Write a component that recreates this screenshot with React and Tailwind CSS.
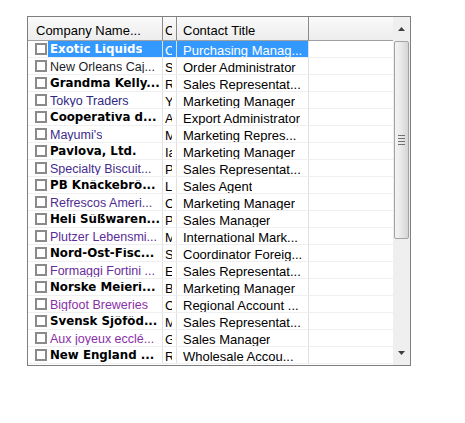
import React from 'react';

// Northwind suppliers, as the grid shows them (cut to the column width)
const rows = [
  { company: 'Exotic Liquids', contact: 'Charlotte Cooper', title: 'Purchasing Manag...', bold: true, color: '#000000' },
  { company: 'New Orleans Caj...', contact: 'Shelley Burke', title: 'Order Administrator', bold: false, color: '#1c1c28' },
  { company: 'Grandma Kelly...', contact: 'Regina Murphy', title: 'Sales Representat...', bold: true, color: '#000000' },
  { company: 'Tokyo Traders', contact: 'Yoshi Nagase', title: 'Marketing Manager', bold: false, color: '#2e2884' },
  { company: 'Cooperativa d...', contact: 'Antonio del Valle Saavedra', title: 'Export Administrator', bold: true, color: '#000000' },
  { company: "Mayumi's", contact: 'Mayumi Ohno', title: 'Marketing Repres...', bold: false, color: '#3b2a8c' },
  { company: 'Pavlova, Ltd.', contact: 'Ian Devling', title: 'Marketing Manager', bold: true, color: '#000000' },
  { company: 'Specialty Biscuit...', contact: 'Peter Wilson', title: 'Sales Representat...', bold: false, color: '#462c8e' },
  { company: 'PB Knäckebrö...', contact: 'Lars Peterson', title: 'Sales Agent', bold: true, color: '#000000' },
  { company: 'Refrescos Ameri...', contact: 'Carlos Diaz', title: 'Marketing Manager', bold: false, color: '#4f2c92' },
  { company: 'Heli Süßwaren...', contact: 'Petra Winkler', title: 'Sales Manager', bold: true, color: '#000000' },
  { company: 'Plutzer Lebensmi...', contact: 'Martin Bein', title: 'International Mark...', bold: false, color: '#5a2c96' },
  { company: 'Nord-Ost-Fisc...', contact: 'Sven Petersen', title: 'Coordinator Foreig...', bold: true, color: '#000000' },
  { company: 'Formaggi Fortini ...', contact: 'Elio Rossi', title: 'Sales Representat...', bold: false, color: '#6a2c9a' },
  { company: 'Norske Meieri...', contact: 'Beate Vileid', title: 'Marketing Manager', bold: true, color: '#000000' },
  { company: 'Bigfoot Breweries', contact: 'Cheryl Saylor', title: 'Regional Account ...', bold: false, color: '#8a30a6' },
  { company: 'Svensk Sjöföd...', contact: 'Michael Björn', title: 'Sales Representat...', bold: true, color: '#000000' },
  { company: 'Aux joyeux ecclé...', contact: 'Guylène Nodier', title: 'Sales Manager', bold: false, color: '#8a30a8' },
  { company: 'New England ...', contact: 'Robb Merchant', title: 'Wholesale Accou...', bold: true, color: '#000000' },
];

function Checkbox() {
  return <span className="block w-[12px] h-[12px] border-2 border-[#8a8a8a] bg-white shrink-0" />;
}

function App() {
  return (
    <div className="w-[465px] h-[423px] bg-white pt-[16px] pl-[27px]" style={{ fontFamily: '"Liberation Sans", Arial, sans-serif' }}>
      <div className="w-[384px] h-[350px] border border-[#7e7e7e] flex overflow-hidden bg-white text-[13px] leading-none">
        {/* grid area */}
        <div className="flex-1 flex flex-col overflow-hidden">
          {/* header */}
          <div className="flex h-[24px] shrink-0 bg-gradient-to-b from-[#fafafa] to-[#ededed] border-b border-[#a0a0a0] text-black">
            <div className="w-[135px] shrink-0 border-r border-[#8a8a8a] pl-[8px] pt-[3px] flex items-center overflow-hidden whitespace-nowrap">Company Name...</div>
            <div className="w-[14px] shrink-0 border-r border-[#8a8a8a] pl-[2px] pr-[4px] pt-[3px] flex items-center">
              <span className="block overflow-hidden whitespace-nowrap">Contact Name</span>
            </div>
            <div className="w-[132px] shrink-0 border-r border-[#8a8a8a] pl-[6px] pt-[3px] flex items-center overflow-hidden whitespace-nowrap">Contact Title</div>
            <div className="flex-1" />
          </div>
          {/* rows */}
          {rows.map((r, i) => {
            const sel = i === 0;
            return (
              <div key={i} className="flex h-[17px] shrink-0 border-b border-[#efefef]">
                <div className="w-[135px] shrink-0 flex items-center border-r border-[#e0e0e0]">
                  <div className="w-[20px] pl-[7px] shrink-0"><Checkbox /></div>
                  <div
                    className={`flex-1 min-w-0 h-full flex items-center pl-[2px] pt-[2px] ${sel ? 'bg-[#3399ff] text-white' : ''}`}
                    style={sel ? undefined : { color: r.color }}
                  >
                    <span
                      className={`block overflow-hidden whitespace-nowrap ${r.bold ? 'font-bold text-[11.8px]' : 'text-[12.5px]'}`}
                      style={r.bold ? { fontFamily: '"DejaVu Sans", Verdana, sans-serif' } : undefined}
                    >
                      {r.company}
                    </span>
                  </div>
                </div>
                <div className={`w-[14px] shrink-0 border-r border-[#e0e0e0] pl-[2px] pr-[4px] pt-[2px] flex items-center ${sel ? 'bg-[#3399ff] text-white' : 'text-black'}`}>
                  <span className="block overflow-hidden whitespace-nowrap">{r.contact}</span>
                </div>
                <div className={`w-[132px] shrink-0 border-r border-[#e0e0e0] pl-[6px] pr-[1px] pt-[2px] flex items-center ${sel ? 'bg-[#3399ff] text-white' : 'text-black'}`}>
                  <span className="block overflow-hidden whitespace-nowrap">{r.title}</span>
                </div>
                <div className="flex-1" />
              </div>
            );
          })}
        </div>
        {/* vertical scrollbar */}
        <div className="w-[17px] shrink-0 flex flex-col bg-[#efefef]">
          <div className="h-[24px] flex items-center justify-center shrink-0">
            <svg width="7" height="4" viewBox="0 0 7 4"><path d="M3.5 0 L7 4 L0 4 Z" fill="#404040" /></svg>
          </div>
          <div className="h-[198px] mx-[1px] rounded-[2px] border border-[#a3a3a3] bg-gradient-to-r from-[#f4f4f4] via-[#e8e8e8] to-[#d4d4d4] flex items-center justify-center shrink-0">
            <div className="flex flex-col gap-[2px]">
              <div className="w-[7px] h-[1px] bg-[#707070]" />
              <div className="w-[7px] h-[1px] bg-[#707070]" />
              <div className="w-[7px] h-[1px] bg-[#707070]" />
              <div className="w-[7px] h-[1px] bg-[#707070]" />
            </div>
          </div>
          <div className="flex-1" />
          <div className="h-[24px] flex items-center justify-center shrink-0">
            <svg width="7" height="4" viewBox="0 0 7 4"><path d="M0 0 L7 0 L3.5 4 Z" fill="#404040" /></svg>
          </div>
        </div>
      </div>
    </div>
  );
}

export default App;
